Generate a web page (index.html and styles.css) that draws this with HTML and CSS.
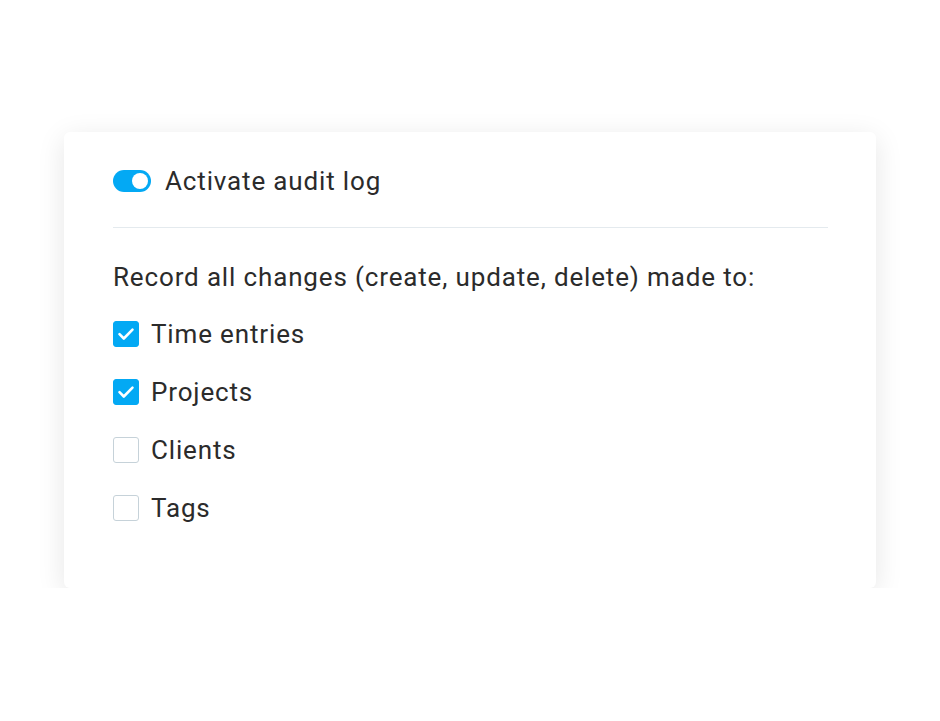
FILE: index.html
```html
<!DOCTYPE html>
<html>
<head>
<meta charset="utf-8">
<link rel="stylesheet" href="styles.css">
</head>
<body>
<div class="card">
  <div class="header">
    <span class="toggle"><span class="knob"></span></span>
    <span class="label">Activate audit log</span>
  </div>
  <div class="divider"></div>
  <div class="heading">Record all changes (create, update, delete) made to:</div>
  <ul class="list">
    <li class="row"><span class="cb checked"><svg viewBox="0 0 26 26" width="26" height="26"><path d="M6.5 13.2l4.3 4.3 8.7-8.8" fill="none" stroke="#fff" stroke-width="2.6" stroke-linecap="round" stroke-linejoin="round"/></svg></span><span class="label">Time entries</span></li>
    <li class="row"><span class="cb checked"><svg viewBox="0 0 26 26" width="26" height="26"><path d="M6.5 13.2l4.3 4.3 8.7-8.8" fill="none" stroke="#fff" stroke-width="2.6" stroke-linecap="round" stroke-linejoin="round"/></svg></span><span class="label">Projects</span></li>
    <li class="row"><span class="cb"></span><span class="label">Clients</span></li>
    <li class="row"><span class="cb"></span><span class="label">Tags</span></li>
  </ul>
</div>
</body>
</html>
```
FILE: styles.css
```css
html, body {
  margin: 0;
  padding: 0;
  background: #fff;
}
body {
  font-family: Roboto, "Liberation Sans", sans-serif;
  color: #2b2b2b;
  font-size: 26px;
  letter-spacing: 0.85px;
}
.card {
  margin: 132px 0 0 64px;
  width: 812px;
  height: 456px;
  box-sizing: border-box;
  padding: 34px 48px 0 49px;
  background: #fff;
  border-radius: 6px;
  box-shadow: 0 6px 28px rgba(0, 0, 0, 0.1);
}
.header {
  display: flex;
  align-items: center;
  height: 30px;
  gap: 14px;
}
.toggle {
  width: 38px;
  height: 22px;
  border-radius: 11px;
  background: #03a9f4;
  display: flex;
  align-items: center;
  justify-content: flex-end;
  padding: 0 3px;
  box-sizing: border-box;
  flex: none;
}
.knob {
  width: 16px;
  height: 16px;
  border-radius: 50%;
  background: #fff;
}
.label {
  line-height: 30px;
}
.divider {
  height: 1px;
  background: #e4eaee;
  margin-top: 31px;
}
.heading {
  margin-top: 34px;
  line-height: 30px;
}
.list {
  list-style: none;
  margin: 27px 0 0;
  padding: 0;
  display: flex;
  flex-direction: column;
  gap: 28px;
}
.row {
  display: flex;
  align-items: center;
  height: 30px;
  gap: 12px;
}
.cb {
  width: 26px;
  height: 26px;
  box-sizing: border-box;
  border: 1px solid #c6d2d9;
  border-radius: 3px;
  background: #fff;
  flex: none;
  display: flex;
}
.cb.checked {
  background: #03a9f4;
  border-color: #03a9f4;
}
.cb svg {
  margin: -1px;
}
```
